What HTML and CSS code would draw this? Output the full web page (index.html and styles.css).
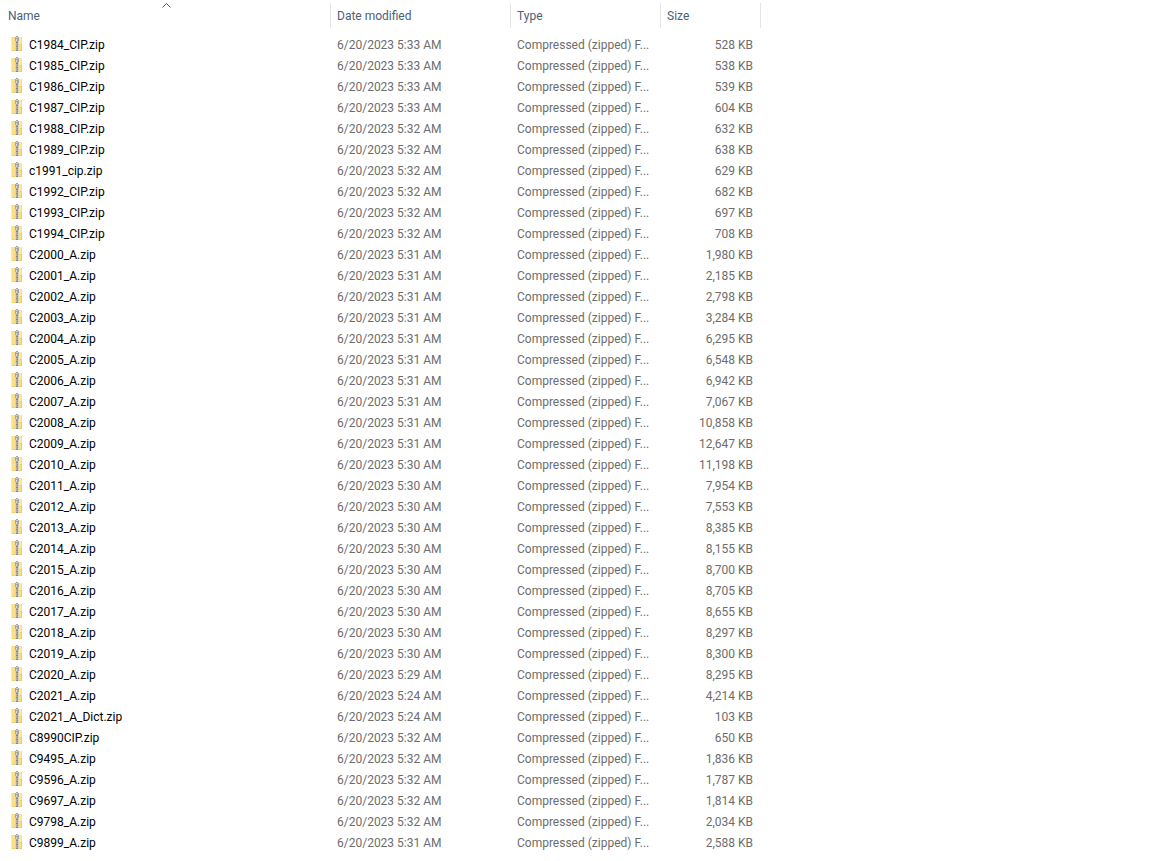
FILE: index.html
```html
<!DOCTYPE html>
<html lang="en">
<head>
  <meta charset="UTF-8">
  <meta name="viewport" content="width=device-width, initial-scale=1.0">
  <title>Files</title>
  <link rel="stylesheet" href="styles.css">
</head>
<body>
  <!-- Zip folder icon, reused on every row -->
  <svg class="icon-defs" aria-hidden="true">
    <symbol id="zip-icon" viewBox="0 0 12 16">
      <rect x="0" y="1" width="11" height="14" fill="#fbe08a"/>
      <rect x="0" y="1" width="1" height="14" fill="#fae9b0"/>
      <rect x="1" y="14" width="10" height="1" fill="#f3d067"/>
      <rect x="8" y="1" width="2" height="7" fill="#fde9a2"/>
      <path d="M9 8h2v7h-2z" fill="#f6cd52"/>
      <rect x="9" y="9" width="1" height="5" fill="#fbdf7c"/>
      <rect x="4" y="1" width="4" height="14" fill="#ddd4b4"/>
      <path d="M5 0h2v1h1v4h-1v1h-2v-1h-1v-4h1z" fill="#a5a5a5"/>
      <rect x="5" y="1" width="2" height="1" fill="#d0d0d0"/>
      <rect x="5" y="3" width="1" height="2" fill="#dcdcdc"/>
      <path d="M5 6h2v9h-2z" fill="#b0aea6"/>
      <path d="M5 6h2v1h-2zM6 8h1v1h-1zM5 10h2v1h-2zM6 12h1v1h-1zM5 14h2v1h-2z" fill="#858585"/>
    </symbol>
  </svg>

  <table class="file-list">
    <colgroup>
      <col class="col-name">
      <col class="col-date">
      <col class="col-type">
      <col class="col-size">
      <col>
    </colgroup>
    <thead>
      <tr>
        <th aria-sort="ascending">
          <button class="sort">Name</button>
          <svg class="sort-arrow" viewBox="0 0 9 5" aria-hidden="true"><path d="M.5 4.5l4-4 4 4" fill="none" stroke="#555"/></svg>
        </th>
        <th><button class="sort">Date modified</button></th>
        <th><button class="sort">Type</button></th>
        <th><button class="sort">Size</button></th>
        <td><div class="header-end"></div></td>
      </tr>
    </thead>
    <tbody id="file-rows">
      <!-- Rows will be populated here -->
    </tbody>
  </table>

  <script>
    // name, time, size in KB
    const files = [
      ['C1984_CIP.zip', '5:33', 528],
      ['C1985_CIP.zip', '5:33', 538],
      ['C1986_CIP.zip', '5:33', 539],
      ['C1987_CIP.zip', '5:33', 604],
      ['C1988_CIP.zip', '5:32', 632],
      ['C1989_CIP.zip', '5:32', 638],
      ['c1991_cip.zip', '5:32', 629],
      ['C1992_CIP.zip', '5:32', 682],
      ['C1993_CIP.zip', '5:32', 697],
      ['C1994_CIP.zip', '5:32', 708],
      ['C2000_A.zip', '5:31', 1980],
      ['C2001_A.zip', '5:31', 2185],
      ['C2002_A.zip', '5:31', 2798],
      ['C2003_A.zip', '5:31', 3284],
      ['C2004_A.zip', '5:31', 6295],
      ['C2005_A.zip', '5:31', 6548],
      ['C2006_A.zip', '5:31', 6942],
      ['C2007_A.zip', '5:31', 7067],
      ['C2008_A.zip', '5:31', 10858],
      ['C2009_A.zip', '5:31', 12647],
      ['C2010_A.zip', '5:30', 11198],
      ['C2011_A.zip', '5:30', 7954],
      ['C2012_A.zip', '5:30', 7553],
      ['C2013_A.zip', '5:30', 8385],
      ['C2014_A.zip', '5:30', 8155],
      ['C2015_A.zip', '5:30', 8700],
      ['C2016_A.zip', '5:30', 8705],
      ['C2017_A.zip', '5:30', 8655],
      ['C2018_A.zip', '5:30', 8297],
      ['C2019_A.zip', '5:30', 8300],
      ['C2020_A.zip', '5:29', 8295],
      ['C2021_A.zip', '5:24', 4214],
      ['C2021_A_Dict.zip', '5:24', 103],
      ['C8990CIP.zip', '5:32', 650],
      ['C9495_A.zip', '5:32', 1836],
      ['C9596_A.zip', '5:32', 1787],
      ['C9697_A.zip', '5:32', 1814],
      ['C9798_A.zip', '5:32', 2034],
      ['C9899_A.zip', '5:31', 2588]
    ];

    document.getElementById('file-rows').innerHTML = files.map(([name, time, size]) => `
      <tr>
        <td><div class="file-name"><svg class="zip" aria-hidden="true"><use href="#zip-icon"/></svg>${name}</div></td>
        <td>6/20/2023 ${time} AM</td>
        <td>Compressed (zipped) F...</td>
        <td class="size">${size.toLocaleString('en-US')} KB</td>
      </tr>`).join('');
  </script>
</body>
</html>
```
FILE: styles.css
```css
body {
  margin: 0;
  background-color: #ffffff;
  color: #6d6d6d;
  font-family: "Segoe UI", Roboto, "Open Sans", sans-serif;
  font-size: 12px;
  line-height: 20px;
}

.icon-defs {
  display: none;
}

.file-list {
  width: 100%;
  table-layout: fixed;
  border-collapse: collapse;
}

.col-name {
  width: 330px;
}

.col-date {
  width: 180px;
}

.col-type {
  width: 150px;
}

.col-size {
  width: 100px;
}

.file-list th,
.file-list thead td {
  position: relative;
  height: 34px;
  padding: 3px 0 6px;
  box-sizing: border-box;
  vertical-align: top;
}

.sort {
  display: block;
  width: 100%;
  height: 25px;
  padding: 0 6px;
  border: none;
  border-left: 1px solid #e5e5e5;
  background: none;
  color: #4c607a;
  font: inherit;
  font-weight: normal;
  text-align: left;
}

.file-list th:first-child .sort {
  border-left: none;
  padding-left: 8px;
}

.header-end {
  height: 25px;
  border-left: 1px solid #e5e5e5;
}

.sort-arrow {
  position: absolute;
  top: 3px;
  left: 50%;
  width: 9px;
  height: 5px;
  margin-left: -3px;
}

.file-list tbody td {
  height: 21px;
  padding: 0 0 0 7px;
  white-space: nowrap;
}

.file-list tbody td:first-child {
  padding-left: 11px;
}

.file-name {
  display: flex;
  align-items: center;
  gap: 6px;
  color: #000000;
}

.zip {
  width: 12px;
  height: 16px;
  margin-bottom: 2px;
}

.file-list tbody .size {
  padding-right: 7px;
  text-align: right;
}
```
